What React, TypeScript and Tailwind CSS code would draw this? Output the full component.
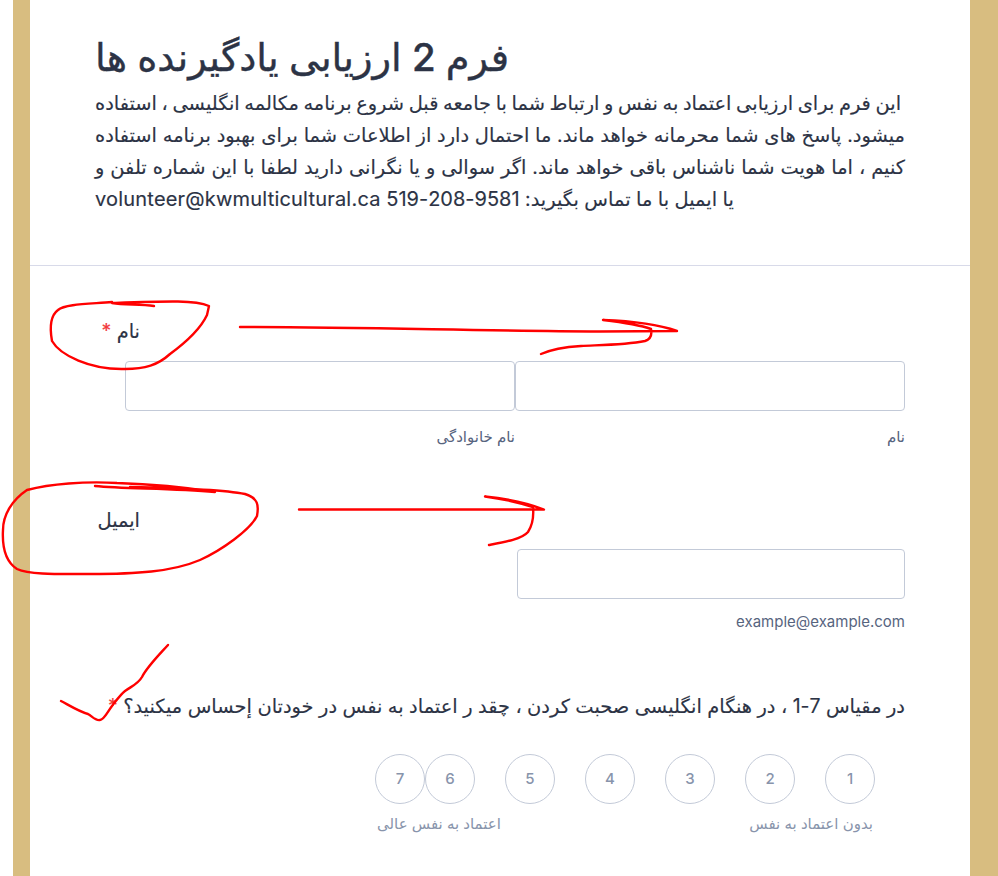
const scale = [1, 2, 3, 4, 5, 6]

function Circle({ n }: { n: number }) {
  return (
    <div className="w-[50px] h-[50px] shrink-0 rounded-full border border-[#c3cad8] flex items-center justify-center text-[15px] font-medium text-[#8894ab]">
      {n}
    </div>
  )
}

function Ink() {
  return (
    <svg className="absolute left-0 top-0 pointer-events-none" width="998" height="876" viewBox="0 0 998 876" fill="none" stroke="#ff0000" strokeWidth="2.4" strokeLinecap="round" strokeLinejoin="round">
      <path d="M112 302C90 304 65 304 58 310C50 316 50 330 52 341C60 355 90 370 125 369C145 369 158 365 170 354C185 343 200 330 207 315L209 306C195 300 170 301 112 303C125 305 140 304 154 306" />
      <path d="M240 327C360 327 480 331 600 331.5L677 331C660 325 630 321 603 320C620 322 640 325 651 329C652 334 651 339 645 341C625 345 600 345 581 346C565 347 550 350 541 354" />
      <path d="M299 509.5H544C530 504 510 499 485 496.5C505 499 520 503 533 507C534 518 532 526 528 532C522 539 505 542 489 545" />
      <path d="M95 486C125 489 170 488 215 492C190 488 150 484 117 483C85 481 50 484 27 490C12 500 3 515 3 530C2 548 6 562 17 569C30 575 60 574 90 574C135 574 172 572 200 560C222 550 250 530 257 516C259 505 258 498 245 494C225 490 180 488 130 487" />
      <path d="M61 701C72 707 80 712 88 714C92 716 95 721 100 720C104 720 108 711 112 706C116 701 120 695 125 691C132 686 138 684 142 677C147 667 158 656 168 645" />
    </svg>
  )
}

export default function App() {
  return (
    <div className="relative h-[876px] w-[998px] overflow-hidden bg-white pl-[13px] text-[#2c3345] font-['Inter','DejaVu_Sans',sans-serif]">
      <div className="h-full bg-[#d8bd80] pl-[17px] pr-[28px]">
        <div dir="rtl" className="h-full w-[940px] bg-white">
          {/* header */}
          <div className="h-[266px] border-b border-[#d8dae9] px-[65px] pt-[33px]">
            <h1 className="text-[38.4px] leading-[48px] font-medium text-left [-webkit-text-stroke:0.4px]">فرم 2 ارزیابی یادگیرنده ها</h1>
            <p className="text-[19.4px] leading-8 [word-spacing:-1.5px] text-justify [text-align-last:left] mt-[6px] [-webkit-text-stroke:0.15px]">
              &nbsp;این فرم برای ارزیابی اعتماد به نفس و ارتباط شما با جامعه قبل شروع برنامه مکالمه انگلیسی ، استفاده میشود. پاسخ های شما محرمانه خواهد ماند. ما احتمال دارد از اطلاعات شما برای بهبود برنامه استفاده کنیم ، اما هویت شما ناشناس باقی خواهد ماند. اگر سوالی و یا نگرانی دارید لطفا با این شماره تلفن و <span className="[word-spacing:0]">یا&nbsp;ایمیل با ما تماس بگیرید: </span><span className="text-[20px] tracking-[0.2px] [word-spacing:0]">9581-208-519 volunteer@kwmulticultural.ca</span>
            </p>
          </div>

          {/* name */}
          <div className="px-[65px] pt-[52px]">
            <div className="flex justify-end">
              <div className="w-[45px] text-[19.4px] leading-[26px] whitespace-nowrap [-webkit-text-stroke:0.15px]">
                نام <span className="text-[#f23a3c]">*</span>
              </div>
            </div>
            <div className="flex mt-[17px]">
              <div className="w-[390px]">
                <div className="h-[50px] rounded border border-[#c3cad8] bg-white" />
                <div className="mt-[16px] text-[15px] leading-[20px] text-[#57647e]">نام</div>
              </div>
              <div className="w-[390px]">
                <div className="h-[50px] rounded border border-[#c3cad8] bg-white" />
                <div className="mt-[16px] text-[15px] leading-[20px] text-[#57647e]">نام خانوادگی</div>
              </div>
            </div>
          </div>

          {/* email */}
          <div className="px-[65px] pt-[60px]">
            <div className="flex justify-end">
              <div className="w-[45px] text-[19.4px] leading-[26px] whitespace-nowrap [-webkit-text-stroke:0.15px]">ایمیل</div>
            </div>
            <div className="w-[388px] mt-[16px]">
              <div className="h-[50px] rounded border border-[#c3cad8] bg-white" />
              <div className="mt-[13px] text-[15px] leading-[20px] text-[#57647e]">example@example.com</div>
            </div>
          </div>

          {/* scale question */}
          <div className="px-[65px] pt-[60px]">
            <div className="text-[19.4px] leading-[28px] whitespace-nowrap [-webkit-text-stroke:0.15px]">
              در مقیاس 7-1 ، در هنگام انگلیسی صحبت کردن ، چقد ر اعتماد به نفس در خودتان إحساس میکنید؟ <span className="text-[#f23a3c]">*</span>
            </div>
            <div className="flex gap-[30px] pr-[30px] mt-[34px]">
              {scale.map((n) => (
                n === 6 ? (
                  <div key={n} className="flex">
                    <Circle n={6} />
                    <Circle n={7} />
                  </div>
                ) : (
                  <Circle key={n} n={n} />
                )
              ))}
            </div>
            <div className="flex justify-between pr-[32px] pl-[282px] mt-[10px] text-[15px] leading-[20px] text-[#8894ab]">
              <span>بدون اعتماد به نفس</span>
              <span>اعتماد به نفس عالی</span>
            </div>
          </div>
        </div>
      </div>
      <Ink />
    </div>
  )
}
